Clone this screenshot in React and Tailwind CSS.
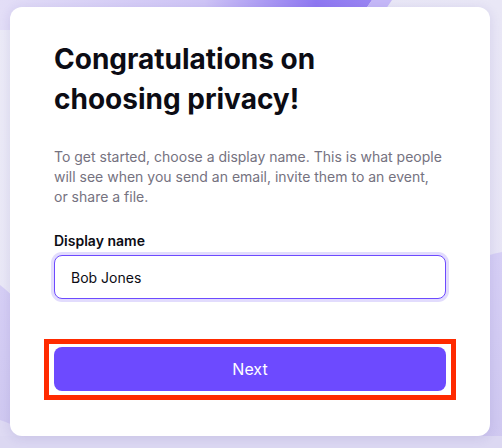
import React from "react";

function Background() {
  return (
    <svg
      className="absolute inset-0 h-full w-full"
      viewBox="0 0 502 448"
      preserveAspectRatio="none"
      aria-hidden="true"
    >
      <defs>
        <linearGradient id="bg" x1="0" y1="0" x2="1" y2="1">
          <stop offset="0" stopColor="#ecebf7" />
          <stop offset="1" stopColor="#e6e3f5" />
        </linearGradient>
        <linearGradient id="topwave" x1="0" y1="0" x2="1" y2="0">
          <stop offset="0" stopColor="#e3def7" />
          <stop offset="0.55" stopColor="#cfc5f6" />
          <stop offset="0.85" stopColor="#8f78f2" />
          <stop offset="1" stopColor="#9a86f3" />
        </linearGradient>
        <linearGradient id="lowwave" x1="0" y1="0" x2="0" y2="1">
          <stop offset="0" stopColor="#d6cff5" />
          <stop offset="1" stopColor="#cfc8f0" />
        </linearGradient>
      </defs>
      <rect width="502" height="448" fill="url(#bg)" />
      <path d="M0 0 L372 0 C365 10 360 18 352 30 L0 30 Z" fill="url(#topwave)" />
      <path d="M372 0 L392 0 C385 10 380 18 375 30 L352 30 C360 18 365 10 372 0 Z" fill="#c6b9f8" />
      <path d="M0 285 C20 300 40 330 60 340 L60 448 L0 448 Z" fill="url(#lowwave)" />
      <path d="M0 420 C15 425 30 435 60 440 L60 448 L0 448 Z" fill="#dedaf3" />
      <path d="M502 252 C470 258 450 275 440 300 L440 448 L502 448 Z" fill="url(#lowwave)" />
      <rect x="0" y="436" width="502" height="12" fill="#dcd8f2" />
    </svg>
  );
}

export default function App() {
  return (
    <div
      className="relative h-[448px] w-[502px] overflow-hidden"
      style={{ fontFamily: "Inter, 'Noto Sans', sans-serif" }}
    >
      <Background />
      <div className="relative pl-[10px] pr-[12px] pt-[7px]">
        <div className="flex h-[429px] w-[480px] flex-col rounded-[12px] bg-white px-[44px] pt-[32px] shadow-[0_2px_12px_rgba(60,40,150,0.12)]">
          <h1 className="text-[28px] font-bold leading-[40px] text-[#0c0c14]">
            Congratulations on
            <br />
            choosing privacy!
          </h1>
          <p className="mt-[28px] text-[14px] leading-[20px] text-[#75727f]">
            To get started, choose a display name. This is what people will see when you send an email, invite them to an event, or share a file.
          </p>
          <label className="mt-[24px] text-[14px] font-semibold leading-[20px] text-[#0c0c14]">
            Display name
          </label>
          <div className="mt-[4px] flex h-[44px] items-center rounded-[8px] border border-[#6d4aff] bg-white pl-[16px] text-[14px] text-[#0c0c14] shadow-[0_0_0_3px_#e2dcfd]">
            Bob Jones
          </div>
          <div className="relative mt-[48px]">
            <div className="flex h-[44px] items-center justify-center rounded-[8px] bg-[#6d4aff] text-[16px] text-white">
              Next
            </div>
            <div className="pointer-events-none absolute -top-[8px] -bottom-[9px] -left-[10px] -right-[10px] border-[5px] border-[#ff2a00]" />
          </div>
        </div>
      </div>
    </div>
  );
}
